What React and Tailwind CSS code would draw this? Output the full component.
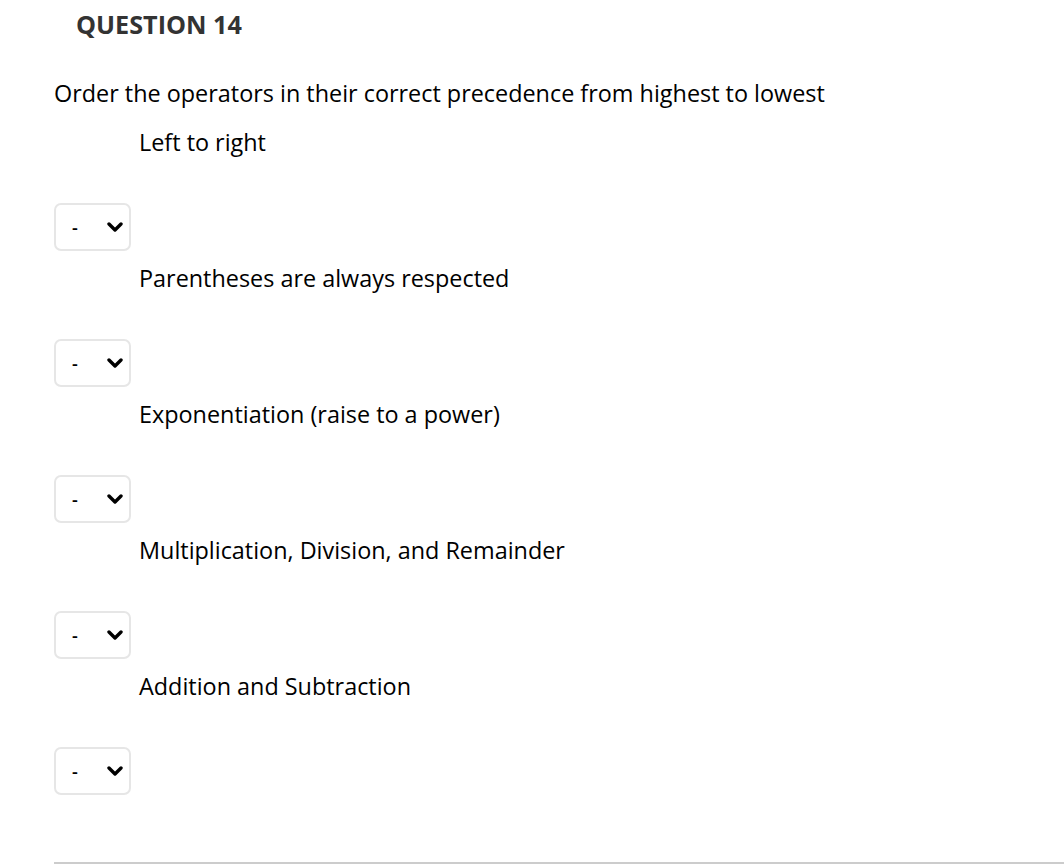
const items = [
    'Left to right',
    'Parentheses are always respected',
    'Exponentiation (raise to a power)',
    'Multiplication, Division, and Remainder',
    'Addition and Subtraction',
];

const Dropdown = () => (
    <div className="w-[77px] h-[48px] border-2 border-[#e6e6e6] rounded-[7px] bg-white flex items-center justify-between pl-[16px] pr-[4px]">
        <span className="text-[18px] font-semibold text-black">-</span>
        <svg width="16" height="12" viewBox="0 0 16 12" className="mr-[2px]">
            <polyline points="2,3 8,9 14,3" fill="none" stroke="#000" strokeWidth="3.4" strokeLinecap="round" strokeLinejoin="round" />
        </svg>
    </div>
);

const App = () => {
    return (
        <div className="w-[1064px] h-[868px] bg-white overflow-hidden font-['Open_Sans',sans-serif]">
            <div className="pl-[54px]">
                <h1 className="pt-[8px] pl-[22px] text-[25.2px] leading-[32px] font-bold text-[#333333]">QUESTION 14</h1>
                <p className="mt-[38px] text-[23.4px] leading-[30px] text-black">
                    Order the operators in their correct precedence from highest to lowest
                </p>
                <div className="mt-[19px]">
                    {items.map((item) => (
                        <div key={item}>
                            <div className="pl-[85px] text-[23.4px] leading-[30px] text-black">{item}</div>
                            <div className="mt-[46px] mb-[12px]">
                                <Dropdown />
                            </div>
                        </div>
                    ))}
                </div>
                <div className="mt-[67px] h-[2px] bg-[#cccccc]"></div>
            </div>
        </div>
    );
};

export default App;
